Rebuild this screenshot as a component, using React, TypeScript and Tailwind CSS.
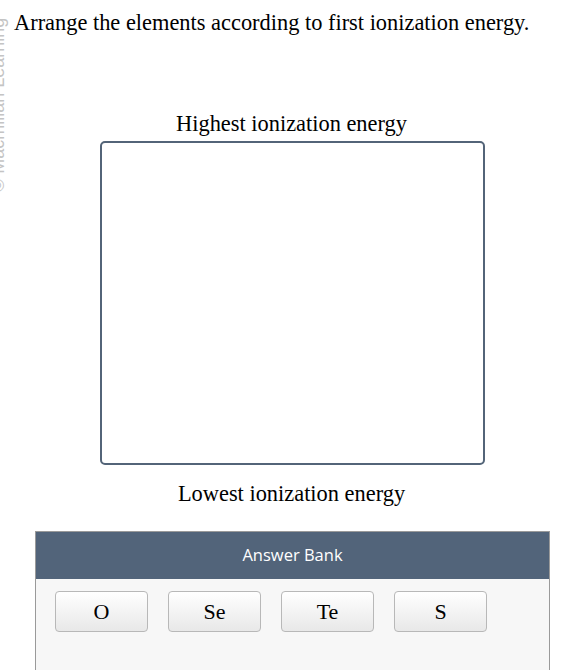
import React from 'react';

const elements = ['O', 'Se', 'Te', 'S'];

export default function App() {
  return (
    <div className="relative w-[583px] h-[670px] overflow-hidden bg-white text-black" style={{ fontFamily: '"Liberation Serif", serif' }}>
      {/* side credit, mostly clipped by the page edge */}
      <div className="absolute left-[-11px] top-[192px] origin-top-left -rotate-90 whitespace-nowrap text-[18px] leading-none text-[#c4c4c4]" style={{ fontFamily: '"Liberation Sans", sans-serif' }}>
        © Macmillan Learning
      </div>

      <p className="pl-[14px] pt-[10px] text-[22.4px] leading-[26px]">
        Arrange the elements according to first ionization energy.
      </p>

      <div className="mt-[75px] flex flex-col items-center">
        <div className="text-[22.4px] leading-[26px]">Highest ionization energy</div>
        <div className="mt-[4px] ml-[1px] w-[385px] h-[324px] rounded-[5px] border-2 border-[#536478]" />
        <div className="mt-[16px] text-[22.4px] leading-[26px]">Lowest ionization energy</div>
      </div>

      <div className="mx-[35px] mt-[24px] w-[515px] border border-[#9a9a9a] border-b-0 bg-[#f7f7f7]">
        <div className="h-[47px] flex items-center justify-center bg-[#52647a] text-white text-[16.5px]" style={{ fontFamily: '"Open Sans", sans-serif' }}>
          Answer Bank
        </div>
        <div className="flex gap-[20px] px-[19px] pt-[12px] h-[100px]">
          {elements.map((el) => (
            <div
              key={el}
              className="w-[93px] h-[41px] flex items-center justify-center rounded-[4px] border border-[#b8b8b8] bg-gradient-to-b from-white to-[#e8e8e8] text-[22px]"
            >
              {el}
            </div>
          ))}
        </div>
      </div>
    </div>
  );
}
